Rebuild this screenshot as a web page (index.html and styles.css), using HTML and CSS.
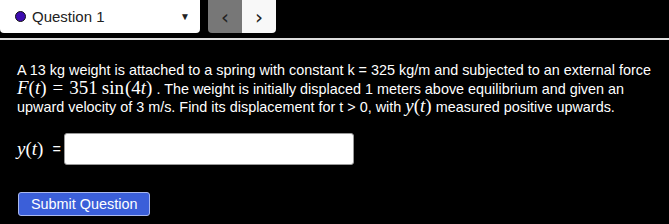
FILE: index.html
```html
<!DOCTYPE html>
<html lang="en">
<head>
    <meta charset="UTF-8">
    <title>Question 1</title>
    <link rel="stylesheet" href="styles.css">
</head>
<body>
    <div class="topbar">
        <div class="picker">
            <span class="dot"></span>
            <span class="picker-label">Question 1</span>
            <span class="caret">&#9660;</span>
        </div>
        <div class="nav">
            <button class="prev">&lsaquo;</button>
            <button class="next">&rsaquo;</button>
        </div>
    </div>
    <hr class="rule">

    <div class="question">
        <p class="prompt">
            A 13 kg weight is attached to a spring with constant k = 325 kg/m and subjected to an external force
            <span class="math"><i>F</i>(<i>t</i>)<span class="rel">=</span>351<span class="fn">sin</span>(4<i>t</i>)</span> . The weight is initially displaced 1 meters above equilibrium and given an
            upward velocity of 3 m/s. Find its displacement for t &gt; 0, with <span class="math"><i>y</i>(<i>t</i>)</span> measured positive upwards.
        </p>

        <div class="answer">
            <span class="math"><i>y</i>(<i>t</i>)</span>
            <span class="eq">=</span>
            <input type="text" class="answer-box">
        </div>

        <button class="submit">Submit Question</button>
    </div>
</body>
</html>
```

FILE: styles.css
```css
* {
    box-sizing: border-box;
}

body {
    margin: 0;
    background: #000;
    color: #fff;
    font-family: "Liberation Sans", Arial, sans-serif;
    font-size: 14.4px;
}

.topbar {
    display: flex;
    align-items: flex-start;
    gap: 8px;
    height: 36px;
}

.picker {
    display: flex;
    align-items: center;
    width: 200px;
    height: 33px;
    background: #fff;
    color: #222;
    border-radius: 0 0 4px 4px;
    padding: 0 10px 0 15px;
    font-size: 15px;
}

.dot {
    width: 11px;
    height: 11px;
    border-radius: 50%;
    background: #3d0bb0;
    border: 1px solid #111;
    margin-right: 6px;
}

.picker-label {
    flex: 1;
}

.caret {
    font-size: 10px;
    color: #222;
}

.nav {
    display: flex;
    height: 33px;
    border-radius: 0 0 4px 4px;
    overflow: hidden;
}

.nav button {
    width: 34px;
    border: none;
    font-size: 20px;
    font-family: "DejaVu Sans", sans-serif;
    color: #222;
    padding: 0;
    line-height: 1;
}

.nav .prev {
    background: #777;
}

.nav .next {
    background: #f8f8f8;
}

.rule {
    margin: 2px 0 0;
    border: none;
    border-top: 2px solid #ddd;
}

.question {
    padding: 21px 17px 10px;
}

.prompt {
    margin: 0;
    line-height: 18.5px;
}

.math {
    font-family: "Liberation Serif", serif;
    font-size: 19px;
    line-height: 12px;
}

.math .rel {
    margin: 0 6px;
}

.math .fn {
    margin: 0 1px 0 4px;
}

.answer {
    display: flex;
    align-items: center;
    margin-top: 16px;
}

.eq {
    margin: 0 3px 0 9px;
}

.answer-box {
    width: 290px;
    height: 32px;
    border: 1px solid #999;
    border-radius: 3px;
    background: #fff;
}

.submit {
    display: block;
    margin-top: 27px;
    margin-left: 1px;
    background: #3b5fd9;
    color: #fff;
    border: 1px solid #aab8ee;
    border-radius: 3px;
    font-family: "Liberation Sans", Arial, sans-serif;
    font-size: 14.4px;
    padding: 3px 12px;
}
```
